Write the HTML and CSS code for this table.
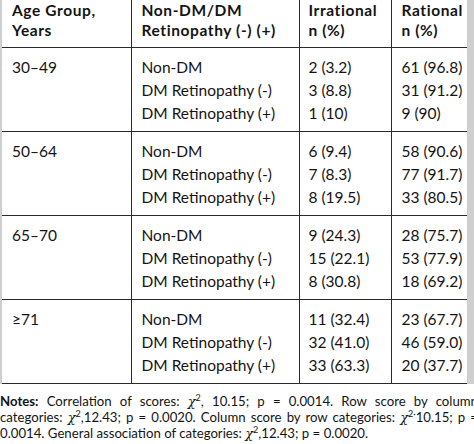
FILE: index.html
```html
<!DOCTYPE html>
<html>
<head>
<meta charset="utf-8">
<link rel="stylesheet" href="styles.css">
</head>
<body>
<div class="frame">
  <table class="data">
    <colgroup>
      <col class="c1"><col class="c2"><col class="c3"><col class="c4">
    </colgroup>
    <thead>
      <tr>
        <th>Age Group,<br>Years</th>
        <th>Non-DM/DM<br>Retinopathy (-) (+)</th>
        <th>Irrational<br>n (%)</th>
        <th>Rational<br>n (%)</th>
      </tr>
    </thead>
    <tbody>
      <tr>
        <td>30–49</td>
        <td>Non-DM<br>DM Retinopathy (-)<br>DM Retinopathy (+)</td>
        <td>2 (3.2)<br>3 (8.8)<br>1 (10)</td>
        <td>61 (96.8)<br>31 (91.2)<br>9 (90)</td>
      </tr>
      <tr>
        <td>50–64</td>
        <td>Non-DM<br>DM Retinopathy (-)<br>DM Retinopathy (+)</td>
        <td>6 (9.4)<br>7 (8.3)<br>8 (19.5)</td>
        <td>58 (90.6)<br>77 (91.7)<br>33 (80.5)</td>
      </tr>
      <tr>
        <td>65–70</td>
        <td>Non-DM<br>DM Retinopathy (-)<br>DM Retinopathy (+)</td>
        <td>9 (24.3)<br>15 (22.1)<br>8 (30.8)</td>
        <td>28 (75.7)<br>53 (77.9)<br>18 (69.2)</td>
      </tr>
      <tr>
        <td>≥71</td>
        <td>Non-DM<br>DM Retinopathy (-)<br>DM Retinopathy (+)</td>
        <td>11 (32.4)<br>32 (41.0)<br>33 (63.3)</td>
        <td>23 (67.7)<br>46 (59.0)<br>20 (37.7)</td>
      </tr>
    </tbody>
  </table>
</div>
<p class="notes"><b>Notes:</b> Correlation of scores: <i class="chi">χ</i><sup>2</sup>, 10.15; p = 0.0014. Row score by column categories: <i class="chi">χ</i><sup>2</sup>,12.43; p = 0.0020. Column score by row categories: <i class="chi">χ</i><sup>2·</sup>10.15; p = 0.0014. General association of categories: <i class="chi">χ</i><sup>2</sup>,12.43; p = 0.0020.</p>
</body>
</html>
```
FILE: styles.css
```css
html, body {
  margin: 0;
  padding: 0;
  background: #fff;
  overflow: hidden;
}
body {
  width: 474px;
  font-family: Lato, "Open Sans", sans-serif;
  color: #141414;
}
.frame {
  background: #cfcfcf;
  padding: 0 7px 0 2px;
}
.data {
  width: 465px;
  border-collapse: collapse;
  background: #fff;
  font-size: 15.5px;
  table-layout: fixed;
}
.c1 { width: 129px; }
.c2 { width: 168px; }
.c3 { width: 92px; }
.c4 { width: 76px; }
.data th, .data td {
  text-align: left;
  vertical-align: top;
  padding: 0 0 0 10px;
  border-left: 1px solid #2a2a2a;
  white-space: nowrap;
  overflow: hidden;
}
.data th:first-child, .data td:first-child {
  border-left: none;
}
.data th {
  font-weight: 700;
  letter-spacing: 0.6px;
  line-height: 20px;
  padding-bottom: 7px;
  border-bottom: 1px solid #2a2a2a;
}
.data td {
  line-height: 23px;
  padding-top: 8px;
  padding-bottom: 6px;
  border-bottom: 1px solid #2a2a2a;
}
.data th:nth-child(3), .data td:nth-child(3) { padding-left: 9px; }
.notes {
  margin: 9px 0 0 0;
  width: 478px;
  font-family: Lato, "Open Sans", sans-serif;
  font-size: 13.2px;
  line-height: 15px;
  text-align: justify;
  text-align-last: left;
  color: #141414;
}
.notes b { font-weight: 700; }
.chi { font-family: "DejaVu Serif", serif; font-size: 13px; }
.notes sup {
  font-size: 9px;
  line-height: 1;
  vertical-align: 5px;
}
```
